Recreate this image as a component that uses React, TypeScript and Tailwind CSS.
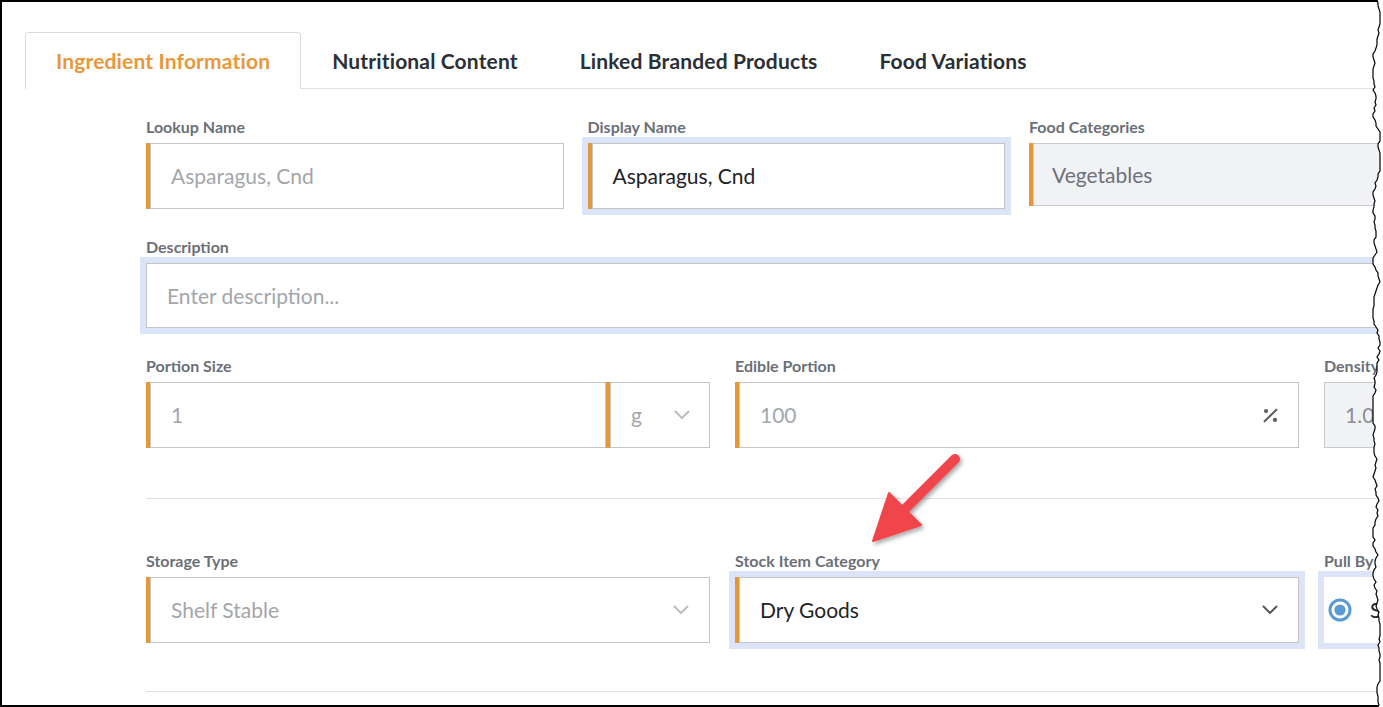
import React from "react";

function Chevron({ color }: { color: string }) {
  return (
    <svg width="16" height="10" viewBox="0 0 16 10" fill="none">
      <path d="M1.5 1.5 L8 8 L14.5 1.5" stroke={color} strokeWidth="2" strokeLinecap="round" strokeLinejoin="round" />
    </svg>
  );
}

function PercentIcon() {
  return (
    <svg width="17" height="17" viewBox="0 0 16 16" fill="none">
      <path d="M2.5 13.5 L13.5 2.5" stroke="#5f6163" strokeWidth="2" strokeLinecap="round" />
      <circle cx="3.8" cy="3.8" r="2" fill="#5f6163" />
      <circle cx="12.2" cy="12.2" r="2" fill="#5f6163" />
    </svg>
  );
}

function Label({ children }: { children: React.ReactNode }) {
  return (
    <div className="h-[20px] mb-[6px] text-[16px] leading-[20px] font-bold text-[#6b7078] whitespace-nowrap">
      {children}
    </div>
  );
}

function Orange() {
  return <div className="w-[4px] shrink-0 bg-[#e5983a]" />;
}

function Jagged() {
  let s = 987654;
  const rnd = () => {
    s = (s * 16807) % 2147483647;
    return s / 2147483647;
  };
  const pts: string[] = [];
  let x = 9;
  for (let y = 0; y <= 708; y += 3) {
    x = Math.max(6, Math.min(13, x + Math.round((rnd() - 0.5) * 4)));
    pts.push(`${x},${y}`);
  }
  const line = "M" + pts.join(" L");
  const poly = line + " L16,708 L16,0 Z";
  return (
    <svg className="absolute top-0 right-0" width="16" height="707" viewBox="0 0 16 707">
      <path d={poly} fill="#ffffff" />
      <path d={line} fill="none" stroke="#000" strokeWidth="1.2" />
    </svg>
  );
}

function Arrow() {
  return (
    <svg className="absolute left-[840px] top-[440px]" width="140" height="120" viewBox="0 0 140 120">
      <defs>
        <filter id="sh" x="-20%" y="-20%" width="150%" height="150%">
          <feDropShadow dx="2" dy="2.5" stdDeviation="2" floodColor="#000" floodOpacity="0.35" />
        </filter>
      </defs>
      <g filter="url(#sh)">
        <path d="M115 19 L62 72" stroke="#f0454b" strokeWidth="10" strokeLinecap="round" />
        <path d="M33 101 L49 53 L81 85 Z" fill="#f0454b" stroke="#f0454b" strokeWidth="2" strokeLinejoin="round" />
      </g>
    </svg>
  );
}

export default function App() {
  const tabs = ["Nutritional Content", "Linked Branded Products", "Food Variations"];
  return (
    <div className="relative w-[1383px] h-[707px] bg-white overflow-hidden font-['Lato',sans-serif]">
      <div className="w-[1383px] h-[707px] border-l-2 border-t-2 border-b-2 border-black overflow-hidden">
        {/* Tabs */}
        <div className="pt-[30px] pl-[23px]">
          <div className="flex border-b border-[#dcdfe4]">
            <div className="h-[57px] -mb-px px-[30px] flex items-center border border-b-0 border-[#d8dce2] rounded-t-[4px] bg-white text-[21px] font-bold tracking-[0.15px] text-[#e8983a] whitespace-nowrap">
              Ingredient Information
            </div>
            {tabs.map((t) => (
              <div
                key={t}
                className="h-[56px] px-[30px] flex items-center border border-transparent border-b-0 text-[21px] font-bold tracking-[0.15px] text-[#2b2f36] whitespace-nowrap"
              >
                {t}
              </div>
            ))}
          </div>
        </div>

        {/* Form */}
        <div className="ml-[144px] w-[1742px]">
          {/* Row 1 */}
          <div className="mt-[28px] grid grid-cols-4 gap-x-[24px]">
            <div>
              <Label>Lookup Name</Label>
              <div className="flex h-[66px]">
                <Orange />
                <div className="flex-1 border border-[#c4c4c4] flex items-center pl-[20px] text-[21px] text-[#a3a6ab]">
                  Asparagus, Cnd
                </div>
              </div>
            </div>
            <div>
              <Label>Display Name</Label>
              <div className="flex h-[66px] shadow-[0_0_0_6px_#dce5f7]">
                <Orange />
                <div className="flex-1 border border-[#c4c4c4] bg-white flex items-center pl-[20px] text-[21px] text-[#1f2328]">
                  Asparagus, Cnd
                </div>
              </div>
            </div>
            <div>
              <Label>Food Categories</Label>
              <div className="flex h-[63px]">
                <Orange />
                <div className="flex-1 border border-[#c9cacd] bg-[#f1f2f6] flex items-center pl-[18px] text-[21px] text-[#6d7178]">
                  Vegetables
                </div>
              </div>
            </div>
            <div />
          </div>

          {/* Row 2 */}
          <div className="mt-[28px]">
            <Label>Description</Label>
            <div className="h-[65px] border border-[#c4c4c4] bg-white shadow-[0_0_0_6px_#dce5f7] flex items-center pl-[20px] text-[21px] text-[#a3a6ab]">
              Enter description...
            </div>
          </div>

          {/* Row 3 */}
          <div className="mt-[28px] grid grid-cols-3 gap-x-[25px]">
            <div>
              <Label>Portion Size</Label>
              <div className="flex h-[66px]">
                <Orange />
                <div className="flex-1 border border-[#c4c4c4] flex items-center pl-[20px] text-[21px] text-[#a3a6ab]">
                  1
                </div>
                <Orange />
                <div className="w-[100px] shrink-0 border border-[#c4c4c4] flex items-center justify-between pl-[20px] pr-[19px] text-[21px] text-[#a3a6ab]">
                  <span>g</span>
                  <Chevron color="#bdbdbd" />
                </div>
              </div>
            </div>
            <div>
              <Label>Edible Portion</Label>
              <div className="flex h-[66px]">
                <Orange />
                <div className="flex-1 border border-[#c4c4c4] flex items-center justify-between pl-[20px] pr-[19px] text-[21px] text-[#a3a6ab]">
                  <span>100</span>
                  <PercentIcon />
                </div>
              </div>
            </div>
            <div>
              <Label>Density</Label>
              <div className="h-[66px] border border-[#c9cacd] bg-[#f1f2f6] flex items-center pl-[20px] text-[21px] text-[#8b8f95]">
                1.0
              </div>
            </div>
          </div>

          <div className="mt-[50px] h-px bg-[#e2e2e2]" />

          {/* Row 4 */}
          <div className="mt-[52px] grid grid-cols-3 gap-x-[25px]">
            <div>
              <Label>Storage Type</Label>
              <div className="flex h-[66px]">
                <Orange />
                <div className="flex-1 border border-[#c4c4c4] flex items-center justify-between pl-[20px] pr-[20px] text-[21px] text-[#a3a6ab]">
                  <span>Shelf Stable</span>
                  <Chevron color="#bdbdbd" />
                </div>
              </div>
            </div>
            <div>
              <Label>Stock Item Category</Label>
              <div className="flex h-[66px] shadow-[0_0_0_6px_#dce5f7]">
                <Orange />
                <div className="flex-1 border border-[#c4c4c4] bg-white flex items-center justify-between pl-[20px] pr-[20px] text-[21px] text-[#1f2328]">
                  <span>Dry Goods</span>
                  <Chevron color="#555a60" />
                </div>
              </div>
            </div>
            <div>
              <Label>Pull By</Label>
              <div className="h-[66px] bg-white shadow-[0_0_0_6px_#dce5f7] flex items-center pl-[4px] gap-[18px] text-[21px] text-[#1f2328] whitespace-nowrap">
                <svg width="24" height="24" viewBox="0 0 24 24" fill="none">
                  <circle cx="12" cy="12" r="10" stroke="#5b9bd5" strokeWidth="3" />
                  <circle cx="12" cy="12" r="5.6" fill="#5b9bd5" />
                </svg>
                <span>Stock Item</span>
              </div>
            </div>
          </div>

          <div className="mt-[48px] h-px bg-[#e2e2e2]" />
        </div>
      </div>
      <Arrow />
      <Jagged />
    </div>
  );
}
